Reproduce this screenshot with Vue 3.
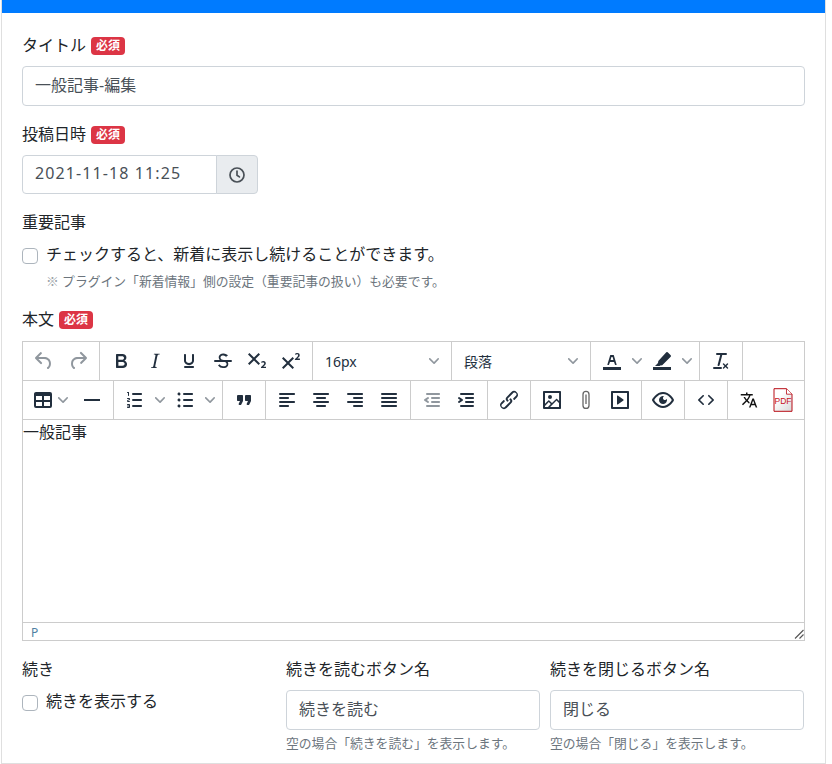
<template>
  <div class="card">
    <div class="card-top"></div>
    <div class="card-body">
      <div class="form-group">
        <div class="label">タイトル <span class="badge">必須</span></div>
        <div class="form-control">一般記事-編集</div>
      </div>

      <div class="form-group">
        <div class="label">投稿日時 <span class="badge">必須</span></div>
        <div class="input-group">
          <div class="form-control date">2021-11-18 11:25</div>
          <div class="input-append">
            <svg width="16" height="16" viewBox="0 0 16 16" fill="none" stroke="#495057" stroke-width="1.7" stroke-linecap="round" stroke-linejoin="round">
              <circle cx="8" cy="8" r="7"></circle>
              <path d="M8 4v4.2l2.4 1.7"></path>
            </svg>
          </div>
        </div>
      </div>

      <div class="form-group">
        <div class="label">重要記事</div>
        <div class="check"><span class="check-box"></span>チェックすると、新着に表示し続けることができます。</div>
        <div class="check-note"><span class="mark">※</span> プラグイン「新着情報」側の設定（重要記事の扱い）も必要です。</div>
      </div>

      <div class="form-group">
        <div class="label editor-label">本文 <span class="badge">必須</span></div>
        <div class="editor">
          <div v-for="(row, r) in toolbar" :key="r" class="tool-row">
            <div v-for="(group, g) in row" :key="g" class="tool-group" :class="{ last: group.last }">
              <template v-for="(item, i) in group.items" :key="i">
                <div v-if="item.select" class="tool-select">
                  <span>{{ item.select }}</span>
                  <svg class="chev" width="10" height="10" viewBox="0 0 10 10"><path :d="chevron"></path></svg>
                </div>
                <div v-else class="tool-btn" :class="{ off: item.off, wide: item.split, tbl: item.tbl }">
                  <svg v-if="item.d" width="24" height="24" viewBox="0 0 24 24"><path :d="item.d"></path></svg>
                  <svg v-else-if="item.clip" width="24" height="24" viewBox="0 0 24 24" fill="none" stroke="#666" stroke-width="1.3">
                    <path d="M9 8.5V6.4a3 3 0 0 1 6 0v11a3 3 0 0 1-6 0v-9"></path>
                    <path d="M12 6.5v9.5"></path>
                  </svg>
                  <svg v-else-if="item.translate" class="black" width="18" height="18" viewBox="0 0 24 24"><path :d="translate"></path></svg>
                  <svg v-else-if="item.pdf" width="20" height="24" viewBox="0 0 20 24">
                    <defs>
                      <linearGradient id="pdfFill" x1="0" y1="0" x2="1" y2="1">
                        <stop offset="0.3" stop-color="#ffffff"></stop>
                        <stop offset="1" stop-color="#d8d8d8"></stop>
                      </linearGradient>
                    </defs>
                    <path d="M1 .7h12.5l5.5 5.5v17.1H1z" fill="url(#pdfFill)" stroke="#b80d16"></path>
                    <path d="M13.5.7v5.5H19" fill="#fff" stroke="#b80d16" stroke-width=".8"></path>
                    <text x="10" y="15.5" text-anchor="middle" class="pdf-text">PDF</text>
                  </svg>
                  <svg v-if="item.split" class="chev" width="10" height="10" viewBox="0 0 10 10"><path :d="chevron"></path></svg>
                </div>
              </template>
            </div>
          </div>
          <div class="edit-area">一般記事</div>
          <div class="status">
            <span class="path">p</span>
            <svg class="grip" width="10" height="10" viewBox="0 0 10 10" stroke="#555" stroke-width="1.1" fill="none">
              <path d="M1 9.5 9.5 1M5.5 9.5l4-4"></path>
            </svg>
          </div>
        </div>
      </div>

      <div class="columns">
        <div>
          <div class="label">続き</div>
          <div class="check"><span class="check-box"></span>続きを表示する</div>
        </div>
        <div>
          <div class="label">続きを読むボタン名</div>
          <div class="form-control">続きを読む</div>
          <div class="hint">空の場合「続きを読む」を表示します。</div>
        </div>
        <div>
          <div class="label">続きを閉じるボタン名</div>
          <div class="form-control">閉じる</div>
          <div class="hint">空の場合「閉じる」を表示します。</div>
        </div>
      </div>
    </div>
  </div>
</template>

<script setup>
const chevron = 'M8.7 2.2c.3-.3.8-.3 1 0 .4.4.4.9 0 1.2L5.7 7.8c-.3.3-.9.3-1.2 0L.2 3.4a.8.8 0 0 1 0-1.2c.3-.3.8-.3 1.1 0L5 6l3.7-3.8z'
const translate = 'M12.87 15.07l-2.54-2.51.03-.03c1.74-1.94 2.98-4.17 3.71-6.53H17V4h-7V2H8v2H1v1.99h11.17C11.5 7.92 10.43 9.75 9 11.35 8.07 10.32 7.3 9.19 6.69 8h-2c.73 1.63 1.73 3.17 2.98 4.56l-5.09 5.02L4 19l5-5 3.11 3.11.76-2.04zM18.5 10h-2L12 22h2l1.12-3h4.75L21 22h2l-4.5-12zm-2.62 7l1.62-4.33L19.12 17h-3.24z'

const icons = {
  undo: 'M6.4 8H12c3.7 0 6.2 2 6.8 5.1.6 2.7-.4 5.6-2.3 6.8a1 1 0 0 1-1-1.8c1.1-.6 1.8-2.7 1.4-4.6-.5-2.1-2.1-3.5-4.9-3.5H6.4l3.3 3.3a1 1 0 1 1-1.4 1.4l-5-5a1 1 0 0 1 0-1.4l5-5a1 1 0 0 1 1.4 1.4L6.4 8z',
  redo: 'M17.6 10H12c-2.8 0-4.4 1.4-4.9 3.5-.4 2 .3 4 1.4 4.6a1 1 0 1 1-1 1.8c-2-1.2-2.9-4.1-2.3-6.8.6-3 3-5.1 6.8-5.1h5.6l-3.3-3.3a1 1 0 1 1 1.4-1.4l5 5a1 1 0 0 1 0 1.4l-5 5a1 1 0 0 1-1.4-1.4l3.3-3.3z',
  bold: 'M7.8 19c-.3 0-.5 0-.6-.2l-.2-.5V5.7c0-.2 0-.4.2-.5l.6-.2h5c1.5 0 2.7.3 3.5 1 .7.6 1.1 1.4 1.1 2.5a3 3 0 0 1-.6 1.9c-.4.6-1 1-1.6 1.2.4.1.9.3 1.3.6s.8.7 1 1.2c.4.4.5 1 .5 1.6 0 1.3-.4 2.3-1.3 3-.8.7-2.1 1-3.8 1H7.8zm5-8.3c.6 0 1.2-.1 1.6-.5.4-.3.6-.7.6-1.3 0-1.1-.8-1.7-2.3-1.7H9.3v3.5h3.4zm.5 6c.7 0 1.3-.1 1.7-.4.4-.4.6-.9.6-1.5s-.2-1-.7-1.4c-.4-.3-1-.4-2-.4H9.4v3.8h4z',
  italic: 'M16.7 4.7l-.1.9h-.3c-.6 0-1 0-1.4.3-.3.3-.4.6-.5 1.1l-2.1 9.8v.6c0 .5.4.8 1.4.8h.2l-.2.8H8l.2-.8h.2c1.1 0 1.8-.5 2-1.5l2-9.8.1-.5c0-.6-.4-.8-1.4-.8h-.3l.2-.9h5.8z',
  underline: 'M16 5c.6 0 1 .4 1 1v5.5a4 4 0 0 1-.4 1.8l-1 1.4a5.3 5.3 0 0 1-5.5 1 5 5 0 0 1-1.6-1c-.5-.4-.8-.9-1.1-1.4a4 4 0 0 1-.4-1.8V6c0-.6.4-1 1-1s1 .4 1 1v5.5c0 .3 0 .6.2 1l.6.7a3.3 3.3 0 0 0 2.2.8 3.4 3.4 0 0 0 2.2-.8c.3-.2.4-.5.6-.8l.2-.9V6c0-.6.4-1 1-1zM8 17h8c.6 0 1 .4 1 1s-.4 1-1 1H8a1 1 0 0 1 0-2z',
  strike: 'M15.6 8.5c-.5-.7-1-1.1-1.3-1.3-.6-.4-1.3-.6-2-.6-2.7 0-2.8 1.7-2.8 2.1 0 1.6 1.8 2 3.2 2.3 4.4.9 4.6 2.8 4.6 3.9 0 1.4-.7 4.1-5 4.1A6.2 6.2 0 0 1 7 16.4l1.5-1.1c.4.6 1.6 2 3.7 2 1.6 0 2.5-.4 3-1 .3-.4.4-.9.4-1.4-.1-1-.7-1.9-3.1-2.4-.8-.2-2-.4-3.1-1a3.5 3.5 0 0 1-1.7-3.1c0-1.2.5-2.2 1.4-3a5.2 5.2 0 0 1 3.5-1c2 0 3.5 1 4.4 2.1l-1.8 1zM4 11h16a1 1 0 0 1 0 2H4a1 1 0 0 1 0-2z',
  sub: 'M10.4 10l4.6 4.6-1.4 1.4L9 11.4 4.4 16 3 14.6 7.6 10 3 5.4 4.4 4 9 8.6 13.6 4 15 5.4 10.4 10zM21 19h-5v-1l1-.8 1.7-1.6c.3-.4.5-.8.5-1.2 0-.3 0-.6-.2-.7-.2-.2-.5-.3-.9-.3a2 2 0 0 0-.8.2l-.7.3-.4-1.1 1-.6 1.2-.2c.8 0 1.4.3 1.8.7.4.4.6.9.6 1.5s-.2 1.1-.5 1.6a8 8 0 0 1-1.3 1.3l-.6.6h2.6V19z',
  sup: 'M15 9.4L10.4 14l4.6 4.6-1.4 1.4L9 15.4 4.4 20 3 18.6 7.6 14 3 9.4 4.4 8 9 12.6 13.6 8 15 9.4zm5.9 1.6h-5v-1l1-.8 1.7-1.6c.3-.5.5-.9.5-1.3 0-.3 0-.5-.2-.7-.2-.2-.5-.3-.9-.3l-.8.2-.7.4-.4-1.2c.2-.2.5-.4 1-.5.3-.2.8-.2 1.2-.2.8 0 1.4.2 1.8.6.4.4.6 1 .6 1.6 0 .5-.2 1-.5 1.5l-1.3 1.4-.6.5h2.6V11z',
  color: 'M3 18h18v3H3zM8.7 16h-.8a.5.5 0 0 1-.5-.6l2.7-9c.1-.3.3-.4.5-.4h2.8c.2 0 .4.1.5.4l2.7 9a.5.5 0 0 1-.5.6h-.8a.5.5 0 0 1-.4-.4l-.7-2.2c0-.3-.3-.4-.5-.4h-3.4c-.2 0-.4.1-.5.4l-.7 2.2c0 .3-.2.4-.4.4zm2.6-7.6l-.6 2a.5.5 0 0 0 .5.6h1.6a.5.5 0 0 0 .5-.6l-.6-2c0-.3-.3-.4-.5-.4h-.4c-.2 0-.4.1-.5.4z',
  highlight: 'M3 18h18v3H3zM17.7 3.3l3 3a1 1 0 0 1 0 1.4l-8.5 8.5-2 .3-.6.5H5l3-3 .3-2L16.3 3.3a1 1 0 0 1 1.4 0z',
  clear: 'M13.2 6a1 1 0 0 1 0 .2l-2.6 10a1 1 0 0 1-1 .8h-.2a.8.8 0 0 1-.8-1l2.6-10H8a1 1 0 1 1 0-2h9a1 1 0 0 1 0 2h-3.8zM5 18h7a1 1 0 0 1 0 2H5a1 1 0 0 1 0-2zm13 1.5L16.5 18 15 19.5a.7.7 0 0 1-1-1l1.5-1.5-1.5-1.5a.7.7 0 0 1 1-1l1.5 1.5 1.5-1.5a.7.7 0 0 1 1 1L17.5 17l1.5 1.5a.7.7 0 0 1-1 1z',
  table: 'M19 4a2 2 0 0 1 2 2v12a2 2 0 0 1-2 2H5a2 2 0 0 1-2-2V6c0-1.1.9-2 2-2h14zM5 14v4h6v-4H5zm14 0h-6v4h6v-4zm0-6h-6v4h6V8zM5 12h6V8H5v4z',
  hr: 'M4 11h16v2H4z',
  numlist: 'M10 17h8c.6 0 1 .4 1 1s-.4 1-1 1h-8a1 1 0 0 1 0-2zm0-6h8c.6 0 1 .4 1 1s-.4 1-1 1h-8a1 1 0 0 1 0-2zm0-6h8c.6 0 1 .4 1 1s-.4 1-1 1h-8a1 1 0 1 1 0-2zM6 4v3.5c0 .3-.2.5-.5.5a.5.5 0 0 1-.5-.5V5h-.5a.5.5 0 0 1 0-1H6zm-1 8.8l.2.2h1.3c.3 0 .5.2.5.5s-.2.5-.5.5H4.9a1 1 0 0 1-.9-1V13c0-.4.3-.8.6-1l1.2-.4.2-.3a.2.2 0 0 0-.2-.2H4.5a.5.5 0 0 1-.5-.5c0-.3.2-.5.5-.5h1.6c.5 0 .9.4.9 1v.1c0 .4-.3.8-.6 1l-1.2.4-.2.3zM7 17v2c0 .6-.4 1-1 1H4.5a.5.5 0 0 1 0-1h1.2c.2 0 .3-.1.3-.3 0-.2-.1-.3-.3-.3H4.4a.4.4 0 1 1 0-.8h1.3c.2 0 .3-.1.3-.3 0-.2-.1-.3-.3-.3H4.5a.5.5 0 1 1 0-1H6c.6 0 1 .4 1 1z',
  bullist: 'M11 5h8c.6 0 1 .4 1 1s-.4 1-1 1h-8a1 1 0 0 1 0-2zm0 6h8c.6 0 1 .4 1 1s-.4 1-1 1h-8a1 1 0 0 1 0-2zm0 6h8c.6 0 1 .4 1 1s-.4 1-1 1h-8a1 1 0 0 1 0-2zM4.5 6c0-.4.1-.8.4-1 .3-.4.7-.5 1.1-.5.4 0 .8.1 1 .4.4.3.5.7.5 1.1 0 .4-.1.8-.4 1-.3.4-.7.5-1.1.5-.4 0-.8-.1-1-.4-.4-.3-.5-.7-.5-1.1zm0 6c0-.4.1-.8.4-1 .3-.4.7-.5 1.1-.5.4 0 .8.1 1 .4.4.3.5.7.5 1.1 0 .4-.1.8-.4 1-.3.4-.7.5-1.1.5-.4 0-.8-.1-1-.4-.4-.3-.5-.7-.5-1.1zm0 6c0-.4.1-.8.4-1 .3-.4.7-.5 1.1-.5.4 0 .8.1 1 .4.4.3.5.7.5 1.1 0 .4-.1.8-.4 1-.3.4-.7.5-1.1.5-.4 0-.8-.1-1-.4-.4-.3-.5-.7-.5-1.1z',
  quote: 'M7.5 17h.9c.4 0 .7-.2.9-.6L11 13V8c0-.6-.4-1-1-1H6a1 1 0 0 0-1 1v4c0 .6.4 1 1 1h2l-1.3 2.7a1 1 0 0 0 .8 1.3zm8 0h.9c.4 0 .7-.2.9-.6L19 13V8c0-.6-.4-1-1-1h-4a1 1 0 0 0-1 1v4c0 .6.4 1 1 1h2l-1.3 2.7a1 1 0 0 0 .8 1.3z',
  left: 'M5 5h14c.6 0 1 .4 1 1s-.4 1-1 1H5a1 1 0 1 1 0-2zm0 4h8c.6 0 1 .4 1 1s-.4 1-1 1H5a1 1 0 1 1 0-2zm0 8h8c.6 0 1 .4 1 1s-.4 1-1 1H5a1 1 0 0 1 0-2zm0-4h14c.6 0 1 .4 1 1s-.4 1-1 1H5a1 1 0 0 1 0-2z',
  center: 'M5 5h14c.6 0 1 .4 1 1s-.4 1-1 1H5a1 1 0 1 1 0-2zm3 4h8c.6 0 1 .4 1 1s-.4 1-1 1H8a1 1 0 1 1 0-2zm0 8h8c.6 0 1 .4 1 1s-.4 1-1 1H8a1 1 0 0 1 0-2zm-3-4h14c.6 0 1 .4 1 1s-.4 1-1 1H5a1 1 0 0 1 0-2z',
  right: 'M5 5h14c.6 0 1 .4 1 1s-.4 1-1 1H5a1 1 0 1 1 0-2zm6 4h8c.6 0 1 .4 1 1s-.4 1-1 1h-8a1 1 0 0 1 0-2zm0 8h8c.6 0 1 .4 1 1s-.4 1-1 1h-8a1 1 0 0 1 0-2zm-6-4h14c.6 0 1 .4 1 1s-.4 1-1 1H5a1 1 0 0 1 0-2z',
  justify: 'M5 5h14c.6 0 1 .4 1 1s-.4 1-1 1H5a1 1 0 1 1 0-2zm0 4h14c.6 0 1 .4 1 1s-.4 1-1 1H5a1 1 0 1 1 0-2zm0 4h14c.6 0 1 .4 1 1s-.4 1-1 1H5a1 1 0 0 1 0-2zm0 4h14c.6 0 1 .4 1 1s-.4 1-1 1H5a1 1 0 0 1 0-2z',
  outdent: 'M7 5h12c.6 0 1 .4 1 1s-.4 1-1 1H7a1 1 0 1 1 0-2zm5 4h7c.6 0 1 .4 1 1s-.4 1-1 1h-7a1 1 0 0 1 0-2zm0 4h7c.6 0 1 .4 1 1s-.4 1-1 1h-7a1 1 0 0 1 0-2zm-5 4h12a1 1 0 0 1 0 2H7a1 1 0 0 1 0-2zm1.6-3.8a1 1 0 0 1-1.2 1.6l-3-2a1 1 0 0 1 0-1.6l3-2a1 1 0 0 1 1.2 1.6L6.8 12l1.8 1.2z',
  indent: 'M7 5h12c.6 0 1 .4 1 1s-.4 1-1 1H7a1 1 0 1 1 0-2zm5 4h7c.6 0 1 .4 1 1s-.4 1-1 1h-7a1 1 0 0 1 0-2zm0 4h7c.6 0 1 .4 1 1s-.4 1-1 1h-7a1 1 0 0 1 0-2zm-5 4h12a1 1 0 0 1 0 2H7a1 1 0 0 1 0-2zm-2.6-3.8L6.2 12l-1.8-1.2a1 1 0 0 1 1.2-1.6l3 2a1 1 0 0 1 0 1.6l-3 2a1 1 0 1 1-1.2-1.6z',
  link: 'M6.2 12.3a1 1 0 0 1 1.4 1.4l-2 2a2 2 0 1 0 2.6 2.8l4.8-4.8a1 1 0 0 0 0-1.4 1 1 0 1 1 1.4-1.3 2.9 2.9 0 0 1 0 4L9.6 20a3.9 3.9 0 0 1-5.5-5.5l2-2zm11.6-.6a1 1 0 0 1-1.4-1.4l2-2a2 2 0 1 0-2.6-2.8L11 10.3a1 1 0 0 0 0 1.4A1 1 0 1 1 9.6 13a2.9 2.9 0 0 1 0-4L14.4 4a3.9 3.9 0 0 1 5.5 5.5l-2 2z',
  image: 'M5 15.7l3.3-3.2c.3-.3.7-.3 1 0L12 15l4.1-4c.3-.4.8-.4 1 0l2 1.9V5H5v10.7zM5 18V19h3l2.8-2.9-2-2L5 17.9zm14-3l-2.5-2.4-6.4 6.5H19v-4zM4 3h16c.6 0 1 .4 1 1v16c0 .6-.4 1-1 1H4a1 1 0 0 1-1-1V4c0-.6.4-1 1-1zm6 8a2 2 0 1 0 0-4 2 2 0 0 0 0 4z',
  media: 'M4 3h16c.6 0 1 .4 1 1v16c0 .6-.4 1-1 1H4a1 1 0 0 1-1-1V4c0-.6.4-1 1-1zm1 2v14h14V5H5zm4.8 2.6l5.6 4a.5.5 0 0 1 0 .8l-5.6 4A.5.5 0 0 1 9 16V8a.5.5 0 0 1 .8-.4z',
  preview: 'M3.5 12.5c.5.8 1.1 1.6 1.8 2.3 2 2 4.2 3.2 6.7 3.2s4.7-1.2 6.7-3.2a16.2 16.2 0 0 0 2.1-2.8 15.7 15.7 0 0 0-2.1-2.8c-2-2-4.2-3.2-6.7-3.2a9.3 9.3 0 0 0-6.7 3.2A16.2 16.2 0 0 0 3.2 12c0 .2.2.3.3.5zm-2.4-1l.7-1.2L4 7.8C6.2 5.4 8.9 4 12 4c3 0 5.8 1.4 8.1 3.8a18.2 18.2 0 0 1 2.8 3.7v1l-.7 1.2-2.1 2.5c-2.3 2.4-5 3.8-8.1 3.8-3 0-5.8-1.4-8.1-3.8a18.2 18.2 0 0 1-2.8-3.7 1 1 0 0 1 0-1zm12-3.3a2 2 0 1 0 2.7 2.6 4 4 0 1 1-2.7-2.6z',
  code: 'M9.8 15.7c.3.3.3.8 0 1-.3.4-.9.4-1.2 0l-4.4-4.1a.8.8 0 0 1 0-1.2l4.4-4.2c.3-.3.9-.3 1.2 0 .3.3.3.8 0 1.1L6 12l3.8 3.7zM14.2 15.7c-.3.3-.3.8 0 1 .4.4.9.4 1.2 0l4.4-4.1c.3-.3.3-.9 0-1.2l-4.4-4.2a.8.8 0 0 0-1.2 0c-.3.3-.3.8 0 1.1L18 12l-3.8 3.7z',
}

const btn = (name, opts = {}) => ({ d: icons[name], ...opts })

const toolbar = [
  [
    { items: [btn('undo', { off: true }), btn('redo', { off: true })] },
    { items: ['bold', 'italic', 'underline', 'strike', 'sub', 'sup'].map(n => btn(n)) },
    { items: [{ select: '16px' }] },
    { items: [{ select: '段落' }] },
    { items: [btn('color', { split: true }), btn('highlight', { split: true })] },
    { items: [btn('clear')] },
  ],
  [
    { items: [btn('table', { split: true, tbl: true }), btn('hr')] },
    { items: [btn('numlist', { split: true }), btn('bullist', { split: true })] },
    { items: [btn('quote')] },
    { items: ['left', 'center', 'right', 'justify'].map(n => btn(n)) },
    { items: [btn('outdent', { off: true }), btn('indent')] },
    { items: [btn('link')] },
    { items: [btn('image'), { clip: true }, btn('media')] },
    { items: [btn('preview')] },
    { items: [btn('code')] },
    { last: true, items: [{ translate: true }, { pdf: true }] },
  ],
]
</script>

<style scoped>
.card {
  box-sizing: border-box;
  width: 825px;
  height: 764px;
  margin-left: 1px;
  border: 1px solid #dfdfdf;
  border-top: 0;
  overflow: hidden;
  color: #212529;
  font-family: "Noto Sans", "Noto Sans CJK JP", sans-serif;
  font-size: 16px;
  line-height: 25px;
  background: #fff;
}

.card-top {
  height: 13px;
  margin: 0 -1px;
  background: #007bff;
}

.card-body {
  padding: 20px 20px 0;
}

.form-group {
  margin-bottom: 16px;
}

.label {
  margin-bottom: 8px;
}

.editor-label {
  margin-bottom: 9px;
}

.badge {
  display: inline-block;
  padding: 3px 4.8px;
  margin-left: 1px;
  border-radius: 4px;
  background: #dc3545;
  color: #fff;
  font-size: 12px;
  font-weight: 700;
  line-height: 12px;
  vertical-align: 1px;
}

.form-control {
  box-sizing: border-box;
  height: 40px;
  padding: 6px 12px;
  border: 1px solid #ced4da;
  border-radius: 4px;
  color: #495057;
}

.input-group {
  display: flex;
  width: 236px;
}

.date {
  flex: 1;
  height: 39px;
  padding-top: 5px;
  border-radius: 4px 0 0 4px;
  letter-spacing: 1.1px;
}

.input-append {
  box-sizing: border-box;
  display: flex;
  align-items: center;
  justify-content: center;
  width: 42px;
  margin-left: -1px;
  border: 1px solid #ced4da;
  border-radius: 0 4px 4px 0;
  background: #e9ecef;
}

.check {
  display: flex;
  align-items: center;
  height: 23px;
}

.check-box {
  box-sizing: border-box;
  flex: none;
  width: 16px;
  height: 16px;
  margin: 2px 8px 0 0;
  border: 1px solid #adb5bd;
  border-radius: 4px;
  background: #fff;
}

.check-note {
  margin-top: 5px;
  padding-left: 24px;
  color: #6c757d;
  font-size: 12.8px;
  line-height: 20px;
}

.mark {
  color: #9aa1a7;
  font-family: "Noto Sans CJK JP", sans-serif;
}

.editor {
  border: 1px solid #ccc;
}

.tool-row {
  display: flex;
  height: 38px;
  border-bottom: 1px solid #ccc;
}

.tool-group {
  display: flex;
  align-items: center;
  padding: 0 4px;
  border-right: 1px solid #ccc;
}

.tool-group.last {
  border-right: 0;
}

.tool-btn {
  display: flex;
  align-items: center;
  justify-content: center;
  width: 34px;
  height: 34px;
  fill: #222f3e;
}

.tool-btn.off {
  fill: rgba(34, 47, 62, 0.5);
}

.tool-btn.wide {
  justify-content: flex-start;
  width: 50px;
  padding-left: 5px;
  box-sizing: border-box;
}

.tool-btn.tbl {
  width: 48px;
  padding-left: 4px;
}

.chev {
  flex: none;
  margin-left: 8px;
  fill: rgba(34, 47, 62, 0.5);
}

.tool-btn.tbl .chev {
  margin-left: 3px;
}

.black {
  fill: #111;
}

.pdf-text {
  fill: #c8101a;
  font-family: "Liberation Sans", sans-serif;
  font-size: 8.5px;
  text-anchor: middle;
}

.tool-select {
  display: flex;
  align-items: center;
  justify-content: space-between;
  box-sizing: border-box;
  width: 130px;
  height: 34px;
  padding: 0 8px;
  color: #222f3e;
  font-size: 14px;
}

.edit-area {
  box-sizing: border-box;
  height: 203px;
  color: #212529;
  line-height: 24px;
  border-bottom: 1px solid #ccc;
}

.status {
  position: relative;
  height: 17px;
  padding-left: 8px;
}

.path {
  display: block;
  color: #4f7fa3;
  font-size: 12px;
  line-height: 19px;
  text-transform: uppercase;
}

.grip {
  position: absolute;
  right: 0;
  bottom: 1px;
}

.columns {
  display: grid;
  grid-template-columns: repeat(3, 254px);
  gap: 10px;
}

.hint {
  margin-top: 3px;
  color: #6c757d;
  font-size: 12.8px;
  line-height: 20px;
}
</style>

<style>
html,
body {
  margin: 0;
  overflow: hidden;
  background: #fff;
}
</style>
